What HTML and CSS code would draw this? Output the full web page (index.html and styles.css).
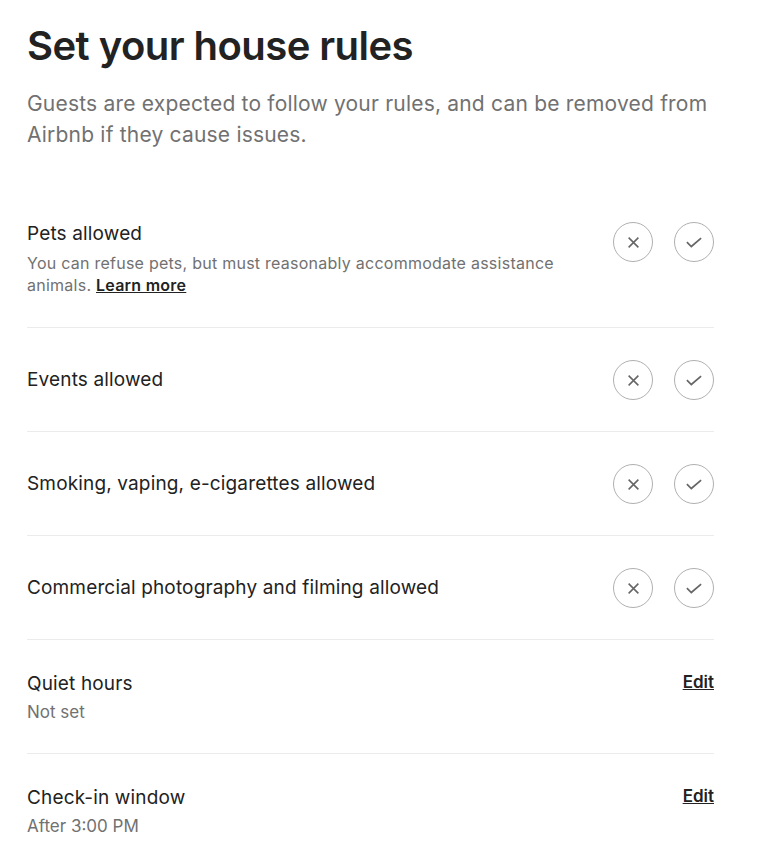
FILE: index.html
```html
<!DOCTYPE html>
<html lang="en">
<head>
<meta charset="utf-8">
<title>Set your house rules</title>
<link rel="stylesheet" href="styles.css">
</head>
<body>
<main class="page">
  <h1 class="title">Set your house rules</h1>
  <p class="intro">Guests are expected to follow your rules, and can be removed from Airbnb if they cause issues.</p>

  <ul class="rules">
    <li class="rule">
      <div class="rule-text">
        <div class="rule-name">Pets allowed</div>
        <div class="rule-sub">You can refuse pets, but must reasonably accommodate assistance animals. <a class="link" href="#">Learn more</a></div>
      </div>
      <div class="choices">
        <button class="choice choice-no" aria-label="No"><svg viewBox="0 0 16 16"><path d="M2 2l12 12M14 2L2 14"/></svg></button>
        <button class="choice choice-yes" aria-label="Yes"><svg viewBox="0 0 18 12"><path d="M1 5.5l5 5 11-9.5"/></svg></button>
      </div>
    </li>
    <li class="rule">
      <div class="rule-text">
        <div class="rule-name">Events allowed</div>
      </div>
      <div class="choices">
        <button class="choice choice-no" aria-label="No"><svg viewBox="0 0 16 16"><path d="M2 2l12 12M14 2L2 14"/></svg></button>
        <button class="choice choice-yes" aria-label="Yes"><svg viewBox="0 0 18 12"><path d="M1 5.5l5 5 11-9.5"/></svg></button>
      </div>
    </li>
    <li class="rule">
      <div class="rule-text">
        <div class="rule-name">Smoking, vaping, e-cigarettes allowed</div>
      </div>
      <div class="choices">
        <button class="choice choice-no" aria-label="No"><svg viewBox="0 0 16 16"><path d="M2 2l12 12M14 2L2 14"/></svg></button>
        <button class="choice choice-yes" aria-label="Yes"><svg viewBox="0 0 18 12"><path d="M1 5.5l5 5 11-9.5"/></svg></button>
      </div>
    </li>
    <li class="rule">
      <div class="rule-text">
        <div class="rule-name">Commercial photography and filming allowed</div>
      </div>
      <div class="choices">
        <button class="choice choice-no" aria-label="No"><svg viewBox="0 0 16 16"><path d="M2 2l12 12M14 2L2 14"/></svg></button>
        <button class="choice choice-yes" aria-label="Yes"><svg viewBox="0 0 18 12"><path d="M1 5.5l5 5 11-9.5"/></svg></button>
      </div>
    </li>
    <li class="rule rule-edit">
      <div class="rule-text">
        <div class="rule-name">Quiet hours</div>
        <div class="rule-value">Not set</div>
      </div>
      <a class="edit" href="#">Edit</a>
    </li>
    <li class="rule rule-edit">
      <div class="rule-text">
        <div class="rule-name">Check-in window</div>
        <div class="rule-value">After 3:00 PM</div>
      </div>
      <a class="edit" href="#">Edit</a>
    </li>
  </ul>
</main>
</body>
</html>
```

FILE: styles.css
```css
* { box-sizing: border-box; }

html, body {
  margin: 0;
  padding: 0;
  background: #ffffff;
}

body {
  font-family: "Inter", "Noto Sans", "Liberation Sans", sans-serif;
  color: #222222;
}

.page {
  width: 687px;
  margin-left: 27px;
  padding-top: 22px;
}

.title {
  margin: 0;
  font-size: 40px;
  line-height: 48px;
  font-weight: 600;
  letter-spacing: -0.55px;
  color: #222222;
}

.intro {
  margin: 18px 0 0;
  font-size: 21px;
  line-height: 31px;
  letter-spacing: 0.2px;
  color: #717171;
  font-weight: 400;
}

.rules {
  list-style: none;
  margin: 40px 0 0;
  padding: 0;
}

.rule {
  display: flex;
  align-items: center;
  justify-content: space-between;
  padding: 32px 0 31px;
  border-bottom: 1px solid #ebebeb;
}

.rule:first-child {
  align-items: flex-start;
}

.rule:last-child {
  border-bottom: none;
}

.rule-edit {
  align-items: flex-start;
  padding-bottom: 30px;
}

.rule-text {
  flex: 1;
  max-width: 560px;
}

.rule-name {
  font-size: 19px;
  line-height: 24px;
  letter-spacing: 0.15px;
  color: #222222;
}

.rule-sub {
  margin-top: 6px;
  font-size: 16px;
  line-height: 22px;
  letter-spacing: 0.25px;
  color: #717171;
}

.rule-value {
  margin-top: 5px;
  font-size: 17px;
  line-height: 22px;
  color: #717171;
}

.link {
  color: #222222;
  font-weight: 600;
  text-decoration: underline;
}

.choices {
  display: flex;
  gap: 21px;
}

.choice {
  width: 40px;
  height: 40px;
  border-radius: 50%;
  border: 1px solid #b0b0b0;
  background: #ffffff;
  display: flex;
  align-items: center;
  justify-content: center;
  padding: 0;
}

.choice svg {
  fill: none;
  stroke: #666666;
  stroke-width: 1.9;
  stroke-linecap: butt;
  stroke-linejoin: miter;
}

.choice-no svg {
  width: 13px;
  height: 13px;
}

.choice-yes svg {
  width: 16px;
  height: 11px;
  margin-top: 1px;
}

.edit {
  margin-top: -2px;
  font-size: 17px;
  line-height: 24px;
  font-weight: 600;
  color: #222222;
  text-decoration: underline;
}
```
